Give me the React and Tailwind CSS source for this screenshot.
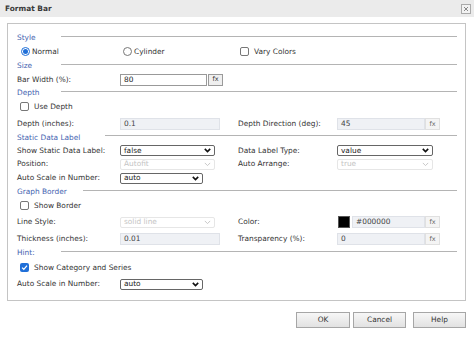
import React from "react";

const FONT = { fontFamily: '"DejaVu Sans", Verdana, sans-serif' };

function Heading({ text, w }) {
  return (
    <div className="flex items-center h-full">
      <div className="text-[#4563b0] shrink-0" style={{ width: w }}>{text}</div>
      <div className="flex-1 h-px bg-[#b4b4b4] mb-[4px]" />
    </div>
  );
}

function Checkbox({ checked }) {
  if (checked) {
    return (
      <div className="w-[9px] h-[9px] rounded-[2px] bg-[#1f6fd8] flex items-center justify-center shrink-0">
        <svg width="7" height="7" viewBox="0 0 10 10">
          <path d="M1.5 5.2 L4 7.6 L8.6 2.4" fill="none" stroke="#fff" strokeWidth="1.8" />
        </svg>
      </div>
    );
  }
  return <div className="w-[9px] h-[9px] rounded-[2px] border border-[#777] bg-white shrink-0" />;
}

function Radio({ checked }) {
  return (
    <div
      className={
        "w-[9px] h-[9px] rounded-full border bg-white flex items-center justify-center shrink-0 " +
        (checked ? "border-[#1f6fd8]" : "border-[#777]")
      }
    >
      {checked && <div className="w-[5px] h-[5px] rounded-full bg-[#1f6fd8]" />}
    </div>
  );
}

function Chevron({ disabled }) {
  return (
    <svg width="7" height="5" viewBox="0 0 7 5" className="shrink-0">
      <path
        d="M0.8 0.9 L3.5 3.6 L6.2 0.9"
        fill="none"
        stroke={disabled ? "#c8c8c8" : "#111"}
        strokeWidth={disabled ? 1 : 1.6}
      />
    </svg>
  );
}

function Select({ value, w, disabled }) {
  return (
    <div
      className={
        "h-[11px] rounded-[2px] border flex items-center justify-between pl-[3px] pr-[3px] " +
        (disabled ? "border-[#e6e6e6] bg-white text-[#c4c4c4]" : "border-[#666] bg-white text-[#222]")
      }
      style={{ width: w }}
    >
      <span className="leading-none">{value}</span>
      <Chevron disabled={disabled} />
    </div>
  );
}

function Input({ value, w, disabled }) {
  return (
    <div
      className={
        "h-[12px] border flex items-center pl-[3px] leading-none " +
        (disabled ? "border-[#dfe2e8] bg-[#eff1f5] text-[#444]" : "border-[#999] bg-white text-[#222]")
      }
      style={{ width: w }}
    >
      {value}
    </div>
  );
}

function Fx({ disabled }) {
  return (
    <div
      className={
        "w-[15px] h-[12px] border flex items-center justify-center text-[6.5px] leading-none " +
        (disabled ? "border-[#e0e0e0] bg-[#f4f4f4] text-[#666]" : "border-[#9a9a9a] bg-[#efefef] text-[#333]")
      }
    >
      fx
    </div>
  );
}

function Row({ h, children, className = "" }) {
  return (
    <div className={"flex items-center " + className} style={{ height: h }}>
      {children}
    </div>
  );
}

function C1({ children }) {
  return <div className="w-[103px] shrink-0 flex items-center">{children}</div>;
}
function C2({ children }) {
  return <div className="w-[118px] shrink-0 flex items-center">{children}</div>;
}
function C3({ children }) {
  return <div className="w-[99px] shrink-0 flex items-center">{children}</div>;
}
function C4({ children }) {
  return <div className="flex-1 flex items-center">{children}</div>;
}

function Btn({ children, w }) {
  return (
    <div
      className="h-[16px] border border-[#a6a6a6] bg-gradient-to-b from-[#f7f7f7] to-[#e2e2e2] flex items-center justify-center text-[#333]"
      style={{ width: w }}
    >
      {children}
    </div>
  );
}

export default function App() {
  return (
    <div className="w-[474px] h-[338px] bg-white text-[7.4px] text-[#333] overflow-hidden" style={FONT}>
      <div className="h-[17px] bg-[#ebebeb] flex items-center justify-between pl-[5px] pr-[3px]">
        <span className="font-bold text-[#3a3a3a]">Format Bar</span>
        <div className="w-[10px] h-[10px] border border-[#aaa] bg-[#f2f2f2] flex items-center justify-center">
          <svg width="6" height="6" viewBox="0 0 6 6">
            <path d="M1 1 L5 5 M5 1 L1 5" stroke="#888" strokeWidth="1" />
          </svg>
        </div>
      </div>

      <div className="pt-[6px] pl-[7px]">
        <div className="w-[459px] h-[278px] border border-[#c4c4c4] bg-white pl-[9px] pr-[8px] pt-[7px]">
          <Row h={14}><div className="flex-1 h-full"><Heading text="Style" w={44} /></div></Row>
          <Row h={14}>
            <div className="w-[106px] flex items-center pl-[4px] gap-[2px]">
              <Radio checked /> <span>Normal</span>
            </div>
            <div className="w-[117px] flex items-center gap-[2px]">
              <Radio /> <span>Cylinder</span>
            </div>
            <div className="flex items-center gap-[5px]">
              <Checkbox /> <span>Vary Colors</span>
            </div>
          </Row>
          <Row h={14}><div className="flex-1 h-full"><Heading text="Size" w={44} /></div></Row>
          <Row h={13}>
            <C1>Bar Width (%):</C1>
            <div className="flex items-center gap-[1px]">
              <Input value="80" w={87} />
              <Fx />
            </div>
          </Row>
          <Row h={14}><div className="flex-1 h-full"><Heading text="Depth" w={44} /></div></Row>
          <Row h={13}>
            <div className="flex items-center gap-[5px] pl-[3px]">
              <Checkbox /> <span>Use Depth</span>
            </div>
          </Row>
          <div className="h-[4px]" />
          <Row h={14}>
            <C1>Depth (inches):</C1>
            <C2><Input value="0.1" w={100} disabled /></C2>
            <C3>Depth Direction (deg):</C3>
            <C4>
              <div className="flex items-center">
                <Input value="45" w={88} disabled />
                <Fx disabled />
              </div>
            </C4>
          </Row>
          <Row h={13}><div className="flex-1 h-full"><Heading text="Static Data Label" w={88} /></div></Row>
          <Row h={13}>
            <C1>Show Static Data Label:</C1>
            <C2><Select value="false" w={95} /></C2>
            <C3>Data Label Type:</C3>
            <C4><Select value="value" w={96} /></C4>
          </Row>
          <Row h={14}>
            <C1>Position:</C1>
            <C2><Select value="Autofit" w={95} disabled /></C2>
            <C3>Auto Arrange:</C3>
            <C4><Select value="true" w={96} disabled /></C4>
          </Row>
          <Row h={14}>
            <C1>Auto Scale in Number:</C1>
            <C2><Select value="auto" w={83} /></C2>
          </Row>
          <Row h={14}><div className="flex-1 h-full"><Heading text="Graph Border" w={66} /></div></Row>
          <Row h={14}>
            <div className="flex items-center gap-[5px] pl-[3px]">
              <Checkbox /> <span>Show Border</span>
            </div>
          </Row>
          <div className="h-[2px]" />
          <Row h={14}>
            <C1>Line Style:</C1>
            <C2><Select value="solid line" w={95} disabled /></C2>
            <C3>Color:</C3>
            <C4>
              <div className="flex items-center">
                <div className="w-[12px] h-[12px] bg-[#000] border border-[#555] mr-[2px] ml-px" />
                <Input value="#000000" w={73} disabled />
                <Fx disabled />
              </div>
            </C4>
          </Row>
          <div className="h-[3px]" />
          <Row h={14}>
            <C1>Thickness (inches):</C1>
            <C2><Input value="0.01" w={100} disabled /></C2>
            <C3>Transparency (%):</C3>
            <C4>
              <div className="flex items-center">
                <Input value="0" w={88} disabled />
                <Fx disabled />
              </div>
            </C4>
          </Row>
          <Row h={14}><div className="flex-1 h-full"><Heading text="Hint:" w={44} /></div></Row>
          <Row h={15}>
            <div className="flex items-center gap-[5px] pl-[3px]">
              <Checkbox checked /> <span>Show Category and Series</span>
            </div>
          </Row>
          <div className="h-[2px]" />
          <Row h={14}>
            <C1>Auto Scale in Number:</C1>
            <C2><Select value="auto" w={83} /></C2>
          </Row>
        </div>
      </div>

      <div className="flex justify-end pr-[8px] pt-[11px] gap-[3px]">
        <Btn w={54}>OK</Btn>
        <Btn w={53}>Cancel</Btn>
        <div className="w-px" />
        <Btn w={53}>Help</Btn>
      </div>
    </div>
  );
}
